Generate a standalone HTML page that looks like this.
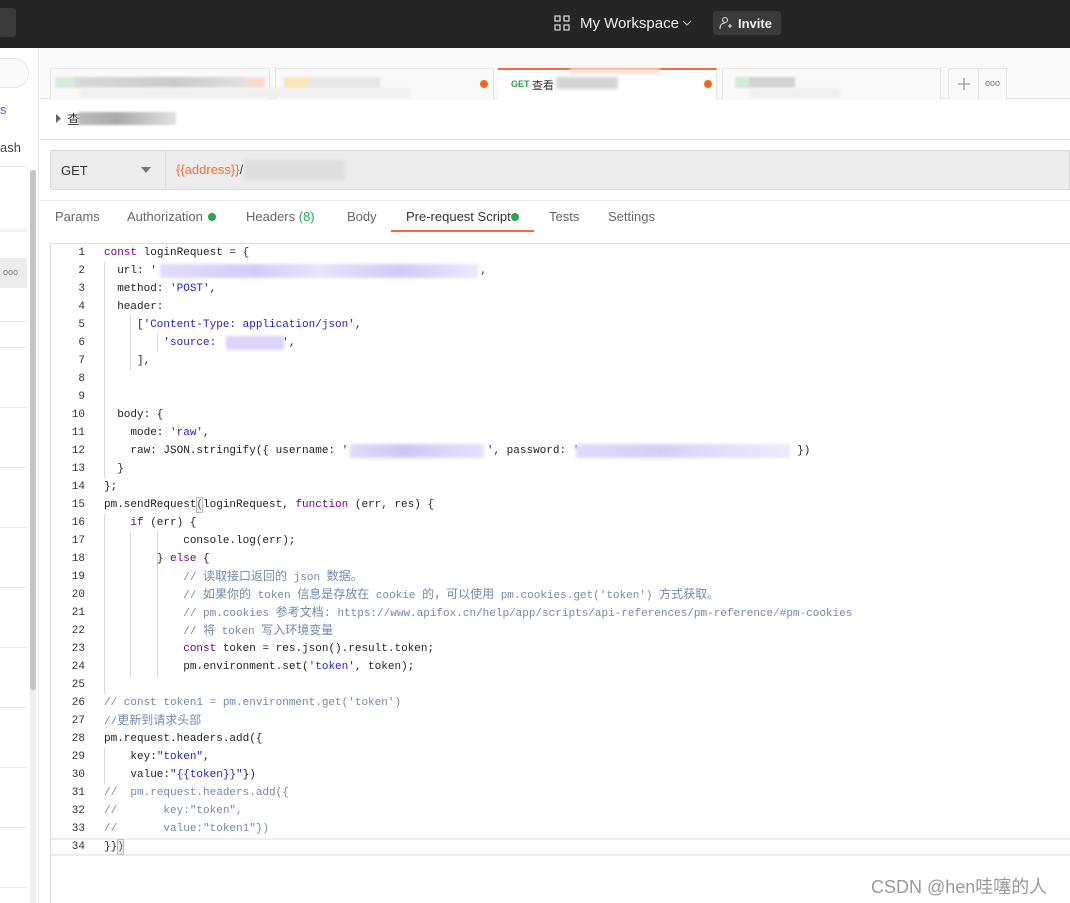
<!DOCTYPE html>
<html><head><meta charset="utf-8"><style>
*{box-sizing:border-box;margin:0;padding:0}
body{width:1070px;height:903px;overflow:hidden;background:#fff;font-family:"Liberation Sans","Noto Sans CJK SC",sans-serif;position:relative}
.a{position:absolute}
.code{position:absolute;left:50px;top:244px;font-family:"Liberation Mono","Noto Sans CJK SC",monospace;font-size:11px;color:#222}
.ln{position:absolute;left:0;width:35px;text-align:right;color:#333;height:18px;line-height:18px}
.cl{position:absolute;left:54px;height:18px;line-height:18px;white-space:pre}
.k{color:#708}.s{color:#22c}.c{color:#7488a8}.z{font-size:12px}
.blur{position:absolute;filter:blur(1.5px)}
.g{position:absolute;width:1px;background:#d8d8d8}
</style></head><body>
<div class="a" style="left:0;top:0;width:1070px;height:48px;background:#252525"></div>
<div class="a" style="left:0;top:8px;width:16px;height:29px;background:#3a3a3a;border-radius:0 3px 3px 0"></div>
<svg class="a" style="left:554px;top:15px" width="16" height="16" viewBox="0 0 16 16" fill="none" stroke="#ddd" stroke-width="1.2"><rect x="1" y="1" width="5" height="5"/><rect x="10" y="1" width="5" height="5"/><rect x="1" y="10" width="5" height="5"/><rect x="10" y="10" width="5" height="5"/></svg>
<div class="a" style="left:580px;top:15px;color:#eee;font-size:15px">My Workspace</div>
<svg class="a" style="left:682px;top:19px" width="10" height="8"><path d="M1 2l4 4 4-4" stroke="#ccc" fill="none"/></svg>
<div class="a" style="left:713px;top:11px;width:68px;height:24px;background:#3a3a3a;border-radius:3px"></div>
<svg class="a" style="left:719px;top:16px" width="14" height="14" fill="none" stroke="#ddd" stroke-width="1.1"><circle cx="6" cy="4" r="2.5"/><path d="M1 13c0-4 2-6 5-6M9 10h4M11 8v4"/></svg>
<div class="a" style="left:738px;top:16px;color:#eee;font-size:13px;font-weight:bold">Invite</div>
<div class="a" style="left:0;top:48px;width:39px;height:855px;background:#fff;border-right:1px solid #e4e4e4"></div>
<div class="a" style="left:0;top:58px;width:29px;height:30px;border:1px solid #e6e6e6;border-left:none;border-radius:0 15px 15px 0;background:#fafafa"></div>
<div class="a" style="left:0;top:102px;color:#3a6fd8;font-size:13px">s</div>
<div class="a" style="left:0;top:140px;color:#444;font-size:13px">ash</div>
<div class="a" style="left:0;top:166px;width:27px;height:1px;background:#e4e4e4"></div>
<div class="a" style="left:0;top:258px;width:27px;height:30px;background:#ececec"></div>
<div class="a" style="left:3px;top:267px;font-size:9px;color:#777">ooo</div>
<div class="a" style="left:30px;top:170px;width:6px;height:733px;background:#eee"></div>
<div class="a" style="left:30px;top:170px;width:6px;height:520px;background:#c4c4c4;border-radius:3px"></div>
<div class="a" style="left:0;top:226px;width:27px;height:6px;background:linear-gradient(#fff,#eee)"></div>
<div class="a" style="left:0;top:321px;width:27px;height:1px;background:#e6e6e6"></div>
<div class="a" style="left:0;top:347px;width:27px;height:1px;background:#e6e6e6"></div>
<div class="a" style="left:0;top:407px;width:27px;height:1px;background:#e6e6e6"></div>
<div class="a" style="left:0;top:467px;width:27px;height:1px;background:#e6e6e6"></div>
<div class="a" style="left:0;top:527px;width:27px;height:1px;background:#e6e6e6"></div>
<div class="a" style="left:0;top:587px;width:27px;height:1px;background:#e6e6e6"></div>
<div class="a" style="left:0;top:647px;width:27px;height:1px;background:#e6e6e6"></div>
<div class="a" style="left:0;top:707px;width:27px;height:1px;background:#e6e6e6"></div>
<div class="a" style="left:0;top:767px;width:27px;height:1px;background:#e6e6e6"></div>
<div class="a" style="left:0;top:827px;width:27px;height:1px;background:#e6e6e6"></div>
<div class="a" style="left:0;top:887px;width:27px;height:1px;background:#e6e6e6"></div>
<div class="a" style="left:40px;top:48px;width:1030px;height:51px;background:#f9f9f9;border-bottom:1px solid #e4e4e4"></div>
<div class="a" style="left:50px;top:68px;width:220px;height:32px;border:1px solid #e4e4e4;border-bottom:none;background:#f9f9f9"></div>
<div class="a" style="left:275px;top:68px;width:219px;height:32px;border:1px solid #e4e4e4;border-bottom:none;background:#f9f9f9"></div>
<div class="a" style="left:498px;top:68px;width:219px;height:32px;border-top:2px solid #f26b3a;border-right:1px solid #e4e4e4;background:#fff"></div>
<div class="a" style="left:722px;top:68px;width:219px;height:32px;border:1px solid #e4e4e4;border-bottom:none;background:#f9f9f9"></div>
<div class="a" style="left:948px;top:68px;width:59px;height:32px;border:1px solid #e4e4e4;border-bottom:none;background:#f9f9f9"></div>
<div class="a" style="left:978px;top:68px;width:1px;height:31px;background:#e4e4e4"></div>
<svg class="a" style="left:957px;top:77px" width="14" height="14"><path d="M7 1v12M1 7h12" stroke="#999" stroke-width="1.3"/></svg>
<div class="a" style="left:985px;top:78px;font-size:9px;color:#777">ooo</div>
<div class="blur" style="left:55px;top:77px;width:210px;height:11px;filter:blur(1px);background:linear-gradient(90deg,#d8ecdc 0,#d8ecdc 20px,#dadada 20px,#cacaca 120px,#e0e0e0 190px,#f6dcd0 190px)"></div>
<div class="blur" style="left:80px;top:88px;width:330px;height:10px;background:#f0f0f0"></div>
<div class="blur" style="left:284px;top:77px;width:96px;height:11px;filter:blur(1px);background:linear-gradient(90deg,#f8e6b8 0,#f8e6b8 24px,#e6e6e6 24px)"></div>
<div class="a" style="left:480px;top:80px;width:8px;height:8px;border-radius:50%;background:#f26b1d"></div>
<div class="a" style="left:511px;top:79px;font-size:9px;font-weight:bold;color:#2a9d4b">GET</div>
<div class="a" style="left:532px;top:77px;font-size:11px;color:#333">查看</div>
<div class="blur" style="left:556px;top:77px;width:62px;height:12px;background:#d4d4d4"></div>
<div class="blur" style="left:570px;top:68px;width:90px;height:6px;background:#fbe0d6"></div>
<div class="a" style="left:704px;top:80px;width:8px;height:8px;border-radius:50%;background:#f26b1d"></div>
<div class="blur" style="left:735px;top:77px;width:60px;height:11px;filter:blur(1px);background:linear-gradient(90deg,#d2ead8 0,#d2ead8 14px,#d2d2d2 14px)"></div>
<div class="blur" style="left:750px;top:88px;width:90px;height:10px;background:#f0f0f0"></div>
<div class="a" style="left:40px;top:139px;width:1030px;height:1px;background:#e4e4e4"></div>
<svg class="a" style="left:56px;top:114px" width="6" height="9"><path d="M0 0l5 4.5L0 9z" fill="#666"/></svg>
<div class="a" style="left:67px;top:109px;font-size:13px;color:#333">查</div>
<div class="blur" style="left:78px;top:112px;width:98px;height:13px;filter:blur(1px);background:linear-gradient(90deg,#bbb,#aaa 40%,#c6c6c6 70%,#e2e2e2)"></div>
<div class="a" style="left:50px;top:150px;width:1020px;height:40px;background:#ececec;border:1px solid #d8d8d8;border-radius:3px 0 0 3px"></div>
<div class="a" style="left:165px;top:151px;width:1px;height:38px;background:#d8d8d8"></div>
<div class="a" style="left:61px;top:163px;font-size:13px;color:#333">GET</div>
<svg class="a" style="left:141px;top:167px" width="10" height="6"><path d="M0 0h10L5 6z" fill="#777"/></svg>
<div class="a" style="left:176px;top:162px;font-size:13px;color:#f0703b">{{address}}<span style="color:#333">/</span></div>
<div class="blur" style="left:244px;top:160px;width:101px;height:20px;background:#dedede"></div>
<div class="a" style="left:40px;top:200px;width:1030px;height:1px;background:#e8e8e8"></div>
<div class="a" style="left:55px;top:209px;font-size:13px;color:#666">Params</div>
<div class="a" style="left:127px;top:209px;font-size:13px;color:#666">Authorization</div>
<div class="a" style="left:208px;top:213px;width:8px;height:8px;border-radius:50%;background:#26a650"></div>
<div class="a" style="left:246px;top:209px;font-size:13px;color:#666">Headers <span style="color:#26a650">(8)</span></div>
<div class="a" style="left:347px;top:209px;font-size:13px;color:#666">Body</div>
<div class="a" style="left:406px;top:209px;font-size:13px;color:#333">Pre-request Script</div>
<div class="a" style="left:511px;top:213px;width:8px;height:8px;border-radius:50%;background:#26a650"></div>
<div class="a" style="left:391px;top:230px;width:143px;height:2px;background:#f26b3a"></div>
<div class="a" style="left:549px;top:209px;font-size:13px;color:#666">Tests</div>
<div class="a" style="left:608px;top:209px;font-size:13px;color:#666">Settings</div>
<div class="a" style="left:50px;top:243px;width:1020px;height:1px;background:#ddd"></div>
<div class="a" style="left:50px;top:243px;width:1px;height:660px;background:#ddd"></div>
<div class="a" style="left:51px;top:838px;width:1019px;height:18px;border-top:2px solid #eee;border-bottom:2px solid #eee"></div>
<div class="g" style="left:104px;top:262px;height:216px"></div>
<div class="g" style="left:130px;top:316px;height:54px"></div>
<div class="g" style="left:157px;top:334px;height:18px"></div>
<div class="g" style="left:104px;top:514px;height:180px"></div>
<div class="g" style="left:130px;top:532px;height:144px"></div>
<div class="g" style="left:157px;top:532px;height:36px"></div>
<div class="g" style="left:157px;top:568px;height:108px"></div>
<div class="g" style="left:104px;top:748px;height:36px"></div>
<div class="code">
<div class="ln" style="top:0">1</div><div class="cl" style="top:0"><span class="k">const</span> loginRequest = {</div>
<div class="ln" style="top:18px">2</div><div class="cl" style="top:18px">  url: <span class="s">'</span>                                                 ,</div>
<div class="ln" style="top:36px">3</div><div class="cl" style="top:36px">  method: <span class="s">'POST'</span>,</div>
<div class="ln" style="top:54px">4</div><div class="cl" style="top:54px">  header:</div>
<div class="ln" style="top:72px">5</div><div class="cl" style="top:72px">     [<span class="s">'Content-Type: application/json'</span>,</div>
<div class="ln" style="top:90px">6</div><div class="cl" style="top:90px">         <span class="s">'source:</span>          <span class="s">'</span>,</div>
<div class="ln" style="top:108px">7</div><div class="cl" style="top:108px">     ],</div>
<div class="ln" style="top:126px">8</div>
<div class="ln" style="top:144px">9</div>
<div class="ln" style="top:162px">10</div><div class="cl" style="top:162px">  body: {</div>
<div class="ln" style="top:180px">11</div><div class="cl" style="top:180px">    mode: <span class="s">'raw'</span>,</div>
<div class="ln" style="top:198px">12</div><div class="cl" style="top:198px">    raw: JSON.stringify({ username: <span class="s">'</span>                     <span class="s">'</span>, password: <span class="s">'</span>                                 })</div>
<div class="ln" style="top:216px">13</div><div class="cl" style="top:216px">  }</div>
<div class="ln" style="top:234px">14</div><div class="cl" style="top:234px">};</div>
<div class="ln" style="top:252px">15</div><div class="cl" style="top:252px">pm.sendRequest(loginRequest, <span class="k">function</span> (err, res) {</div>
<div class="ln" style="top:270px">16</div><div class="cl" style="top:270px">    <span class="k">if</span> (err) {</div>
<div class="ln" style="top:288px">17</div><div class="cl" style="top:288px">            console.log(err);</div>
<div class="ln" style="top:306px">18</div><div class="cl" style="top:306px">        } <span class="k">else</span> {</div>
<div class="ln" style="top:324px">19</div><div class="cl c" style="top:324px">            // <span class="z">读取接口返回的</span> json <span class="z">数据。</span></div>
<div class="ln" style="top:342px">20</div><div class="cl c" style="top:342px">            // <span class="z">如果你的</span> token <span class="z">信息是存放在</span> cookie <span class="z">的，可以使用</span> pm.cookies.get('token') <span class="z">方式获取。</span></div>
<div class="ln" style="top:360px">21</div><div class="cl c" style="top:360px">            // pm.cookies <span class="z">参考文档:</span> https://www.apifox.cn/help/app/scripts/api-references/pm-reference/#pm-cookies</div>
<div class="ln" style="top:378px">22</div><div class="cl c" style="top:378px">            // <span class="z">将</span> token <span class="z">写入环境变量</span></div>
<div class="ln" style="top:396px">23</div><div class="cl" style="top:396px">            <span class="k">const</span> token = res.json().result.token;</div>
<div class="ln" style="top:414px">24</div><div class="cl" style="top:414px">            pm.environment.set(<span class="s">'token'</span>, token);</div>
<div class="ln" style="top:432px">25</div>
<div class="ln" style="top:450px">26</div><div class="cl c" style="top:450px">// const token1 = pm.environment.get('token')</div>
<div class="ln" style="top:468px">27</div><div class="cl c" style="top:468px">//<span class="z">更新到请求头部</span></div>
<div class="ln" style="top:486px">28</div><div class="cl" style="top:486px">pm.request.headers.add({</div>
<div class="ln" style="top:504px">29</div><div class="cl" style="top:504px">    key:<span class="s">"token"</span>,</div>
<div class="ln" style="top:522px">30</div><div class="cl" style="top:522px">    value:<span class="s">"{{token}}"</span>})</div>
<div class="ln" style="top:540px">31</div><div class="cl c" style="top:540px">//  pm.request.headers.add({</div>
<div class="ln" style="top:558px">32</div><div class="cl c" style="top:558px">//       key:"token",</div>
<div class="ln" style="top:576px">33</div><div class="cl c" style="top:576px">//       value:"token1"})</div>
<div class="ln" style="top:594px">34</div><div class="cl" style="top:594px">}})</div>
</div>
<div class="a" style="left:196px;top:497px;width:7px;height:16px;border:1px solid #bbb;background:rgba(200,200,200,.3)"></div>
<div class="a" style="left:117px;top:839px;width:7px;height:16px;border:1px solid #bbb;background:rgba(200,200,200,.3)"></div>
<div class="blur" style="left:160px;top:264px;width:318px;height:14px;background:linear-gradient(90deg,#e2dcfa,#d4ccf8 30%,#e8e4fb 50%,#d2caf6 75%,#ebe8fc)"></div>
<div class="blur" style="left:226px;top:336px;width:58px;height:14px;background:#dcd4fa"></div>
<div class="blur" style="left:350px;top:444px;width:134px;height:14px;background:linear-gradient(90deg,#e0dafa,#cfc6f7 40%,#e6e2fb)"></div>
<div class="blur" style="left:576px;top:444px;width:214px;height:14px;background:linear-gradient(90deg,#e0dafa,#d6cef8 40%,#e4e0fb 70%,#eceafc)"></div>
<div class="a" style="left:871px;top:873px;font-size:18px;color:#999">CSDN @hen哇噻的人</div>
</body></html>
